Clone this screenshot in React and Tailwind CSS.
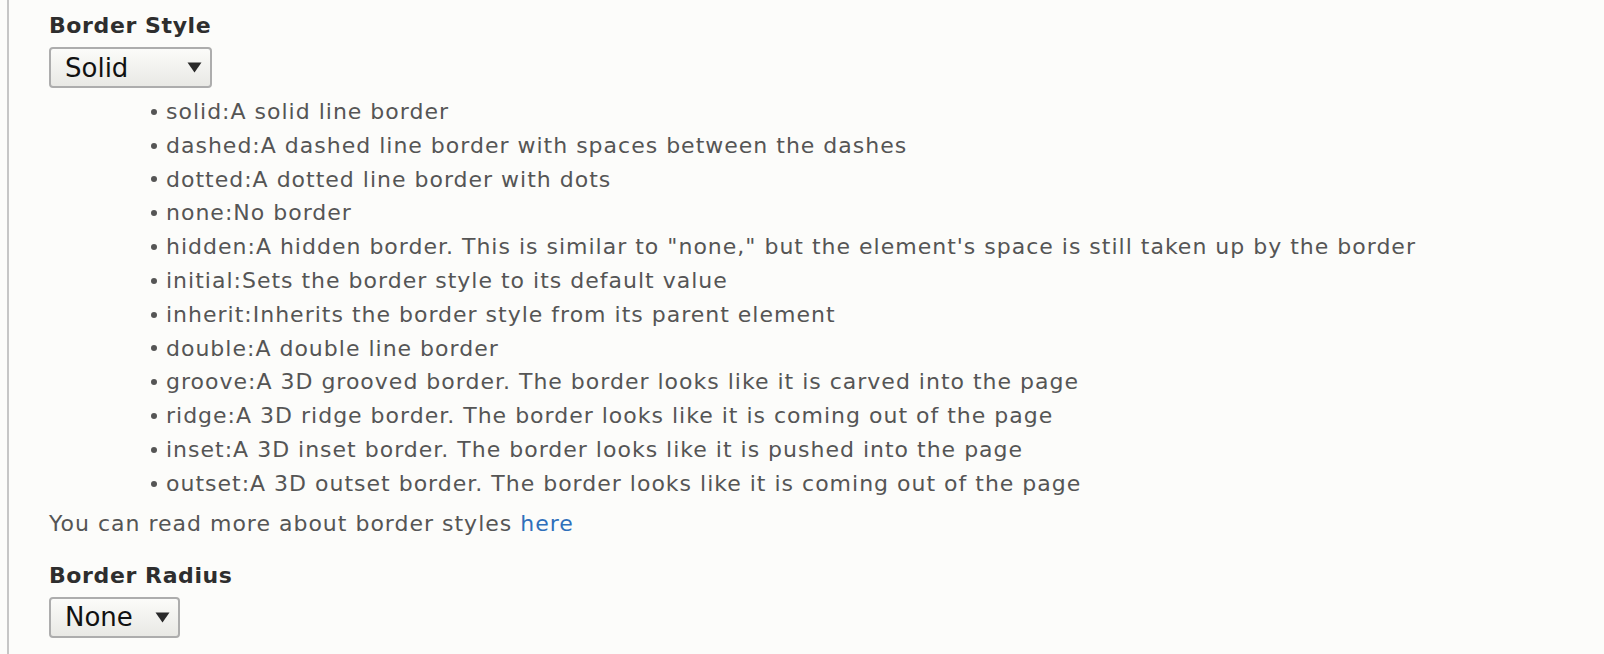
const items = [
  'solid:A solid line border',
  'dashed:A dashed line border with spaces between the dashes',
  'dotted:A dotted line border with dots',
  'none:No border',
  'hidden:A hidden border. This is similar to "none," but the element\'s space is still taken up by the border',
  'initial:Sets the border style to its default value',
  'inherit:Inherits the border style from its parent element',
  'double:A double line border',
  'groove:A 3D grooved border. The border looks like it is carved into the page',
  'ridge:A 3D ridge border. The border looks like it is coming out of the page',
  'inset:A 3D inset border. The border looks like it is pushed into the page',
  'outset:A 3D outset border. The border looks like it is coming out of the page',
];

const Select = ({ value, width }) => (
  <div
    className={`flex items-center justify-between h-[41px] ${width} pl-[14px] pr-[8px] rounded-[4px] border-2 border-[#adadad] bg-gradient-to-b from-[#fbfbf9] to-[#e9e9e5] text-[#111] text-[26px] leading-none`}
  >
    <span>{value}</span>
    <svg width="15" height="11" viewBox="0 0 15 11">
      <path d="M0.5 0.5 H14.5 L7.5 10.5 Z" fill="#2a2a2a" />
    </svg>
  </div>
);

const App = () => {
  return (
    <div className="w-[1604px] h-[654px] bg-[#fcfcfa] font-['DejaVu_Sans',sans-serif] overflow-hidden">
      <div className="h-full ml-[7px] border-l-2 border-[#c6c6c6] pl-[40px] pt-[11px]">
        <h3 className="text-[22px] font-bold text-[#2e2e2e] leading-[30px] tracking-[0.6px]">Border Style</h3>
        <div className="mt-[6px]">
          <Select value="Solid" width="w-[163px]" />
        </div>
        <ul className="mt-[7px] pl-[102px] text-[22px] text-[#555] leading-[33.8px] tracking-[1px]">
          {items.map((item) => (
            <li key={item} className="flex items-center">
              <span className="w-[6px] h-[6px] rounded-full bg-[#555] mr-[9px] shrink-0" />
              {item}
            </li>
          ))}
        </ul>
        <p className="mt-[6px] text-[22px] text-[#555] leading-[34px] tracking-[1px]">
          You can read more about border styles <a className="text-[#2f6fba]">here</a>
        </p>
        <h3 className="mt-[20px] text-[22px] font-bold text-[#2e2e2e] leading-[30px] tracking-[0.6px]">Border Radius</h3>
        <div className="mt-[6px]">
          <Select value="None" width="w-[131px]" />
        </div>
      </div>
    </div>
  );
};

export default App;
